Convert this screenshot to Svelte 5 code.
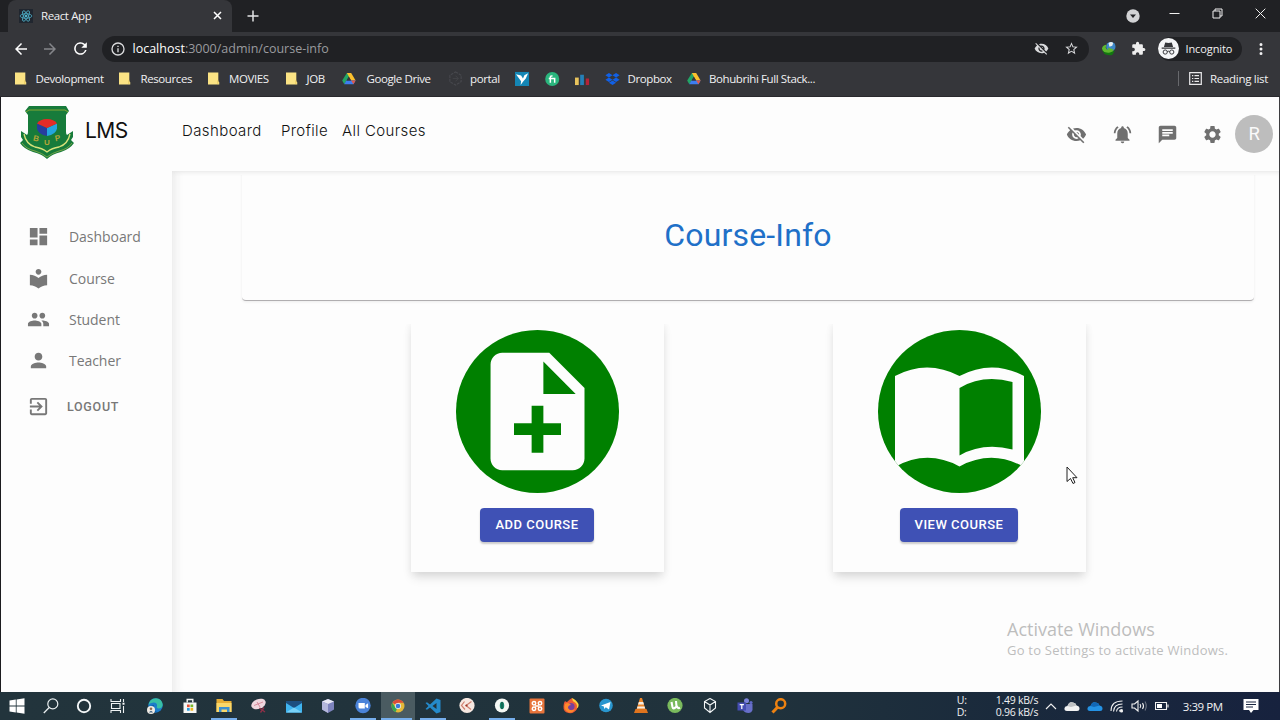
<script>
    // Bookmarks with the width of each slot in the bar
    let bookmarks = [
        { icon: "folder", label: "Devolopment", width: 104, pad: 20.5 },
        { icon: "folder", label: "Resources", width: 89, pad: 21.5 },
        { icon: "folder", label: "MOVIES", width: 78, pad: 21 },
        { icon: "folder", label: "JOB", width: 56, pad: 20.5 },
        { icon: "drive", label: "Google Drive", width: 106, pad: 24.5 },
        { icon: "portal", label: "portal", width: 67, pad: 22 },
        { icon: "bird", label: "", width: 30, pad: 16 },
        { icon: "fiverr", label: "", width: 30, pad: 16 },
        { icon: "bars", label: "", width: 30, pad: 16 },
        { icon: "dropbox", label: "Dropbox", width: 82, pad: 22.5 },
        { icon: "drive", label: "Bohubrihi Full Stack...", width: 140, pad: 22 }
    ];

    let topLinks = ["Dashboard", "Profile", "All Courses"];
    let topIcons = ["hidden", "bell", "chat", "settings"];

    let sideLinks = [
        { icon: "dashboard", label: "Dashboard" },
        { icon: "library", label: "Course" },
        { icon: "people", label: "Student" },
        { icon: "person", label: "Teacher" }
    ];

    let taskApps = [
        { icon: "edge" },
        { icon: "store" },
        { icon: "explorer", open: true },
        { icon: "snip" },
        { icon: "mail" },
        { icon: "cube" },
        { icon: "zoom", open: true },
        { icon: "chrome", open: true, active: true },
        { icon: "vscode", open: true },
        { icon: "anydo" },
        { icon: "mongo", open: true },
        { icon: "xampp" },
        { icon: "firefox" },
        { icon: "telegram" },
        { icon: "vlc" },
        { icon: "utorrent" },
        { icon: "box" },
        { icon: "teams" },
        { icon: "search" }
    ];

    // Single colour icons on a 24 x 24 grid
    const glyphs = {
        back: "M20 11H7.8l5.6-5.6L12 4l-8 8 8 8 1.4-1.4L7.8 13H20z",
        forward: "M4 11h12.2l-5.6-5.6L12 4l8 8-8 8-1.4-1.4 5.6-5.6H4z",
        reload: "M17.65 6.35A8 8 0 1 0 19.73 14h-2.08A6 6 0 1 1 12 6c1.66 0 3.14.69 4.22 1.78L13 11h7V4z",
        info: "M11 7h2v2h-2zm0 4h2v6h-2zm1-9a10 10 0 1 0 0 20 10 10 0 0 0 0-20zm0 18a8 8 0 1 1 0-16 8 8 0 0 1 0 16z",
        star: "M22 9.24l-7.19-.62L12 2 9.19 8.63 2 9.24l5.46 4.73L5.82 21 12 17.27 18.18 21l-1.63-7.03L22 9.24zM12 15.4l-3.76 2.27 1-4.28-3.32-2.88 4.38-.38L12 6.1l1.71 4.04 4.38.38-3.32 2.88 1 4.28L12 15.4z",
        puzzle: "M20.5 11H19V7c0-1.1-.9-2-2-2h-4V3.5a2.5 2.5 0 0 0-5 0V5H4c-1.1 0-2 .9-2 2v3.8h1.5a2.7 2.7 0 0 1 0 5.4H2V20c0 1.1.9 2 2 2h3.800v-1.5a2.7 2.7 0 0 1 5.4 0V22H17c1.1 0 2-.9 2-2v-4h1.500a2.5 2.5 0 0 0 0-5z",
        dots: "M12 8a2 2 0 1 0 0-4 2 2 0 0 0 0 4zm0 2a2 2 0 1 0 0 4 2 2 0 0 0 0-4zm0 6a2 2 0 1 0 0 4 2 2 0 0 0 0-4z",
        hidden: "M12 7c2.76 0 5 2.24 5 5 0 .65-.13 1.26-.36 1.83l2.92 2.92c1.51-1.26 2.7-2.89 3.43-4.75-1.73-4.39-6-7.5-11-7.5-1.4 0-2.74.25-3.98.7l2.16 2.16C10.74 7.13 11.35 7 12 7zM2 4.27l2.28 2.28.46.46C3.08 8.3 1.78 10.02 1 12c1.73 4.39 6 7.5 11 7.5 1.55 0 3.03-.3 4.38-.84l.42.42L19.73 22 21 20.73 3.27 3 2 4.27zM7.53 9.8l1.55 1.55c-.05.21-.08.43-.08.65 0 1.66 1.34 3 3 3 .22 0 .44-.03.65-.08l1.55 1.55c-.67.33-1.41.53-2.2.53-2.76 0-5-2.24-5-5 0-.79.2-1.53.53-2.2zm4.31-.78l3.15 3.15.02-.16c0-1.66-1.34-3-3-3l-.17.01z",
        bell: "M7.58 4.08L6.15 2.65C3.75 4.48 2.17 7.3 2.03 10.5h2c.15-2.65 1.51-4.97 3.55-6.42zm12.39 6.42h2c-.15-3.2-1.73-6.02-4.12-7.85l-1.42 1.43c2.02 1.45 3.39 3.77 3.54 6.42zM18 11c0-3.07-1.64-5.64-4.5-6.32V4c0-.83-.67-1.5-1.5-1.5s-1.5.67-1.5 1.5v.68C7.63 5.36 6 7.92 6 11v5l-2 2v1h16v-1l-2-2v-5zm-6 11c.14 0 .27-.01.4-.04.65-.14 1.18-.58 1.44-1.18.1-.24.15-.5.15-.78h-4c.01 1.1.9 2 2.01 2z",
        chat: "M20 2H4c-1.1 0-1.99.9-1.99 2L2 22l4-4h14c1.1 0 2-.9 2-2V4c0-1.1-.9-2-2-2zM6 9h12v2H6V9zm8 5H6v-2h8v2zm4-6H6V6h12v2z",
        settings: "M19.14 12.94c.04-.3.06-.61.06-.94 0-.32-.02-.64-.07-.94l2.03-1.58c.18-.14.23-.41.12-.61l-1.92-3.32c-.12-.22-.37-.29-.59-.22l-2.39.96c-.5-.38-1.03-.7-1.62-.94l-.36-2.54c-.04-.24-.24-.41-.48-.41h-3.84c-.24 0-.43.17-.47.41l-.36 2.54c-.59.24-1.13.57-1.62.94l-2.39-.96c-.22-.08-.47 0-.59.22L2.74 8.87c-.12.21-.08.47.12.61l2.03 1.58c-.05.3-.09.63-.09.94s.02.64.07.94l-2.03 1.58c-.18.14-.23.41-.12.61l1.92 3.32c.12.22.37.29.59.22l2.39-.96c.5.38 1.03.7 1.62.94l.36 2.54c.05.24.24.41.48.41h3.84c.24 0 .44-.17.47-.41l.36-2.54c.59-.24 1.13-.56 1.62-.94l2.39.96c.22.08.47 0 .59-.22l1.92-3.32c.12-.22.07-.47-.12-.61l-2.01-1.58zM12 15.6c-1.98 0-3.6-1.62-3.6-3.6s1.62-3.6 3.6-3.6 3.6 1.62 3.6 3.6-1.62 3.6-3.6 3.6z",
        dashboard: "M3 13h8V3H3v10zm0 8h8v-6H3v6zm10 0h8V11h-8v10zm0-18v6h8V3h-8z",
        library: "M12 11.55C9.64 9.35 6.48 8 3 8v11c3.48 0 6.64 1.35 9 3.55 2.36-2.19 5.52-3.55 9-3.55V8c-3.48 0-6.64 1.35-9 3.55zM12 8c1.66 0 3-1.34 3-3s-1.34-3-3-3-3 1.34-3 3 1.34 3 3 3z",
        people: "M16 11c1.66 0 2.99-1.34 2.99-3S17.66 5 16 5c-1.66 0-3 1.34-3 3s1.34 3 3 3zm-8 0c1.66 0 2.99-1.34 2.99-3S9.66 5 8 5C6.34 5 5 6.34 5 8s1.34 3 3 3zm0 2c-2.33 0-7 1.17-7 3.5V19h14v-2.5c0-2.33-4.67-3.5-7-3.5zm8 0c-.29 0-.62.02-.97.05 1.16.84 1.97 1.97 1.97 3.45V19h6v-2.5c0-2.33-4.67-3.5-7-3.5z",
        person: "M12 12c2.21 0 4-1.79 4-4s-1.79-4-4-4-4 1.79-4 4 1.79 4 4 4zm0 2c-2.67 0-8 1.34-8 4v2h16v-2c0-2.66-5.33-4-8-4z",
        logout: "M10.09 15.59L11.5 17l5-5-5-5-1.41 1.41L12.67 11H3v2h9.67l-2.58 2.59zM19 3H5c-1.11 0-2 .9-2 2v4h2V5h14v14H5v-4H3v4c0 1.1.89 2 2 2h14c1.1 0 2-.9 2-2V5c0-1.1-.9-2-2-2z",
        noteAdd: "M14 2H6c-1.1 0-1.99.9-1.99 2L4 20c0 1.1.89 2 1.99 2H18c1.1 0 2-.9 2-2V8l-6-6zm2 14h-3v3h-2v-3H8v-2h3v-3h2v3h3v2zm-3-7V3.5L18.500 9H13z"
    };

    // Coloured icons on a 16 x 16 grid
    const art = {
        folder: `<path d="M0 1.500h11v9.500l1 1v2.500H0z" fill="#fbe384"/><path d="M10.500 10v4" stroke="#e5c65b"/>`,
        drive: `<path d="M5.200 2h4.600L4.800 10.500 2.400 14 .2 10.200z" fill="#22a565"/><path d="M5.200 2h4.600l4.700 8.200H9.700z" fill="#fbc02d"/><path d="M4.600 10.200h9.900L12.300 14H2.400z" fill="#3d7df0"/><path d="M9.700 10.200h4.800L12.300 14z" fill="#e0584a"/><path d="M7.200 6l2.400 4.200H4.800z" fill="#35363a"/>`,
        portal: `<path d="M8 1l6 3.500v7L8 15l-6-3.500v-7z" fill="none" stroke="#47484d" stroke-width="1.200" stroke-dasharray="3 1"/><path d="M5 8h6M8 5l3 3-3 3" fill="none" stroke="#424348"/>`,
        bird: `<path d="M0 1h15v15H0z" fill="#1486b5"/><path d="M1 3.500l5.500 1.200L8.500 8 10 4.500l4-2-2.500 5.500-3 3.500L6 15l.500-4z" fill="#fff"/>`,
        fiverr: `<circle cx="7.700" cy="8.500" r="7.500" fill="#2ab57d"/><path d="M5.700 12.500V6.800q0-1.800 2.300-1.500M4 8h6.300v4.500" fill="none" stroke="#fff" stroke-width="1.600"/>`,
        bars: `<path d="M0 7h4v8H0z" fill="#e8c35c"/><path d="M5.500 4h4v11h-4z" fill="#2580b8"/><path d="M11.500 8H15v7h-3.500z" fill="#b62236"/>`,
        dropbox: `<path d="M4.200 2L8 4.400 4.200 6.800.4 4.400zm7.600 0l3.800 2.400-3.800 2.400L8 4.400zM4.200 6.800L8 9.200l-3.800 2.400L.4 9.200zm7.600 0l3.800 2.400-3.800 2.400L8 9.200zM8 10l3.800 2.400L8 14.800l-3.800-2.400z" fill="#1160e6"/>`,
        react: `<path d="M0 0h16v16H0z" fill="#20262f"/><g fill="none" stroke="#4fb3cb" stroke-width=".9"><ellipse cx="8" cy="8" rx="6.700" ry="2.600"/><ellipse cx="8" cy="8" rx="6.700" ry="2.600" transform="rotate(60 8 8)"/><ellipse cx="8" cy="8" rx="6.700" ry="2.600" transform="rotate(120 8 8)"/></g><circle cx="8" cy="8" r="1.400" fill="#4fb3cb"/>`,
        idm: `<circle cx="10.500" cy="6" r="5" fill="#3d87c7"/><path d="M8 2q3-2 5 0l-1 3-3 1z" fill="#e6eef0"/><path d="M1 8q1-4 5-4L5 7q0 2 3 2.500l-.500-2.500 6 2-2 5-1.500-1.500Q2 14 1 8z" fill="#5fb92f"/><path d="M1 8q1 5 8 4.500l6-2.500-3 5Q2 16.500 1 8z" fill="#12780f"/>`,
        incognito: `<circle cx="8" cy="8" r="8" fill="#f4f5f7"/><path d="M5.500 3.500l2.500.4 2.500-.4 1 3.300h-7zM2.800 7.300h10.400v.9H2.800z" fill="#35363a"/><g fill="none" stroke="#35363a" stroke-width=".75"><circle cx="5.500" cy="10.700" r="1.600"/><circle cx="10.500" cy="10.700" r="1.600"/><path d="M7.100 10.300q.9-.5 1.800 0"/></g>`,
        windows: `<path d="M.5 2.400l6.300-.9v6H.5zM7.600 1.400L15.500.3v7.200H7.600zM.5 8.400h6.300v6.100l-6.300-.9zM7.600 8.400h7.900v7.300l-7.900-1.100z" fill="#fff"/>`,
        find: `<circle cx="9.800" cy="5.900" r="5" fill="none" stroke="#e8eef0" stroke-width="1.200"/><path d="M6.200 9.500L.8 15" stroke="#e8eef0" stroke-width="1.300"/>`,
        cortana: `<circle cx="8" cy="8" r="6.200" fill="none" stroke="#f3f6f7" stroke-width="1.900"/>`,
        taskview: `<g fill="none" stroke="#eef2f3" stroke-width="1.100"><path d="M1 1v2.500h9.500V1M1 15v-2.500h9.500V15M1.500 5.500h8.500v5H1.500zM13.500 1v3M13.500 8v7"/></g><path d="M12.500 4.700h2v2h-2z" fill="#fff"/>`,
        edge: `<circle cx="8.500" cy="7.500" r="7.200" fill="#1c7cc9"/><path d="M1.500 7q1-6.500 7.500-6.700 6 .5 6.700 6.200-.2 4-4.200 4-2.500-.3-1.500-2.300Q10.500 4.500 6.500 4.500 3 4.700 1.500 7z" fill="#38bfa5"/><path d="M7 7q-2 5 3.500 7.200-6 1-7.500-4Q4 7 7 7z" fill="#0d57a1"/><circle cx="4" cy="12" r="4" fill="#f0ebe4"/><circle cx="4" cy="10.800" r="1.300" fill="#8b6a50"/><path d="M2 14.500q2-3.500 4 0z" fill="#496a87"/>`,
        store: `<path d="M1.500 4.500h13V15h-13z" fill="#f6f7f5"/><path d="M5.200 4.500v-3h5.600v3" fill="none" stroke="#f6f7f5" stroke-width="1.400"/><path d="M5 6.500h2.700v2.700H5z" fill="#e65034"/><path d="M8.500 6.500h2.700v2.700H8.500z" fill="#77b82a"/><path d="M5 10h2.700v2.700H5z" fill="#299bdc"/><path d="M8.500 10h2.700v2.700H8.500z" fill="#f2b51d"/>`,
        explorer: `<path d="M.5 1h6L8 3h7.500v11H.5z" fill="#e7ae35"/><path d="M.5 5h15v9H.5z" fill="#fad86a"/><path d="M3 9h10.500v5H11v-2.500H5.500V14H3z" fill="#3c8fd0"/>`,
        snip: `<ellipse cx="7.500" cy="6" rx="7.500" ry="4.800" transform="rotate(-22 7.500 6)" fill="#f0d7df"/><path d="M3 7.500L12 4M6 4l3 5" stroke="#d27a8d" stroke-width=".8"/><path d="M8.500 10l5.500 4M13 9.500l-3.500 5" stroke="#8f3048" stroke-width="1.400"/>`,
        mail: `<path d="M0 3h16v11.500H0z" fill="#1d4f80"/><path d="M0 5l8 5 8-5v9.500H0z" fill="#40b5f0"/><path d="M0 14.500l8-5 8 5z" fill="#79d2f8"/>`,
        cube: `<path d="M8 1l6 2.500v8L8 15l-6-3.500v-8z" fill="#7d83bd"/><path d="M8 1l6 2.500L8 6 2 3.500z" fill="#e9e9f5"/><path d="M2 3.500L8 6v9l-6-3.500z" fill="#b4b7dc"/>`,
        zoom: `<circle cx="8" cy="7.500" r="7.700" fill="#4a83d9"/><path d="M3.500 5h6.300v5.500H5q-1.500 0-1.500-1.500zM10.500 7l2.600-1.700v5L10.500 9z" fill="#fff"/>`,
        chrome: `<circle cx="8" cy="8" r="6.500" fill="#e3b838"/><path d="M8 8L2.400 4.700A6.500 6.500 0 0 1 13.600 4.800H8z" fill="#db4b3b"/><path d="M8 8l-2.300 6.100A6.500 6.500 0 0 1 2.400 4.700L5.200 9.400z" fill="#35a354"/><circle cx="8" cy="8" r="3" fill="#f3f3ee"/><circle cx="8" cy="8" r="2.300" fill="#3c79d8"/>`,
        vscode: `<path d="M11.500.5L15.500 2v12l-4 1.500L5 9.500l-3 2.300L.5 11l3-3-3-3L2 4.200l3 2.300zM11.500 5L7.500 8l4 3z" fill="#248acb" fill-rule="evenodd"/>`,
        anydo: `<circle cx="8" cy="7.500" r="7.600" fill="#f7e8e1"/><path d="M12.500 3.500L7 7.500l5 4M5.500 3.500L2.500 7.500 6 11.500" fill="none" stroke="#d08070" stroke-width="1.200"/><circle cx="7.500" cy="7.500" r="1.100" fill="#9d3729"/>`,
        mongo: `<circle cx="8" cy="7.500" r="7.100" fill="#f5f8f5"/><ellipse cx="8" cy="7.500" rx="2.200" ry="3.800" fill="#16866d"/><path d="M8 4v7" stroke="#124e41"/>`,
        xampp: `<rect x=".5" y=".5" width="15" height="15" rx="1" fill="#e8743b"/><g fill="none" stroke="#fff" stroke-width="1.500"><circle cx="5" cy="5.300" r="1.700"/><circle cx="11" cy="5.300" r="1.700"/><circle cx="5" cy="10.700" r="1.700"/><circle cx="11" cy="10.700" r="1.700"/><path d="M6 8h4"/></g>`,
        firefox: `<path d="M2 3q1 1 2 1 3-3 5-4 0 2 3 3.500Q16 7 14 11q-3 5-8.500 4T.5 8Q.5 5 2 3z" fill="#ed5a35"/><path d="M9 0q0 3 3 4.500 3 2.500 1.500 6 2.500-1 2-4.500Q13 1.500 9 0z" fill="#ffcf3e"/><circle cx="8" cy="8.500" r="3.600" fill="#78409f"/><path d="M4 5q3 0 4 2-3 0-3 3 2 4 7 1-2 4-6 3.500Q0 12 2 6z" fill="#ff8a2c"/>`,
        telegram: `<circle cx="8" cy="7.500" r="6.800" fill="#2996cf"/><path d="M3 7.500L12.500 4 11 11.500 7.800 9.300 6.200 11l-.3-2.600z" fill="#fff"/>`,
        vlc: `<path d="M7 0h2l3.500 11.500h-9z" fill="#ee8629"/><path d="M5.800 4h4.400l.8 2.500H5zM4.400 8.500h7.200l.5 2H3.900z" fill="#f5eee4"/><path d="M2.500 11h11L15 15H1z" fill="#df741e"/>`,
        utorrent: `<circle cx="8" cy="7.500" r="7.600" fill="#7aba5d"/><path d="M4.500 4l1 5q.8 3 4-.5L9 3m1 5q.5 3 3 1.800" fill="none" stroke="#fff" stroke-width="2.100"/>`,
        box: `<path d="M8 .5l5.500 3V10L8 14.500 2.500 10V3.500zM2.500 3.500L8 7l5.500-3.500M8 7v7.500" fill="none" stroke="#f2f5f6" stroke-width="1.100"/>`,
        teams: `<circle cx="9.500" cy="2.700" r="2.500" fill="#7c83dc"/><circle cx="14" cy="4.500" r="1.600" fill="#6069c9"/><path d="M6 6h9.500v6q-1 3-4 3-4 0-5.500-3z" fill="#676fc9"/><path d="M.5 4.500h8.500v8H.5z" fill="#454db3"/><path d="M2.700 6.700h4.200M4.800 6.700v4.300" stroke="#fff" stroke-width="1.200"/>`,
        search: `<circle cx="9.700" cy="5.700" r="4.500" fill="none" stroke="#ee8211" stroke-width="2.500"/><path d="M6.500 9.200L1.500 14.500" stroke="#ee8211" stroke-width="3"/>`
    };
</script>

{#snippet glyph(name, size)}
    <svg class="glyph" width={size} height={size} viewBox="0 0 24 24"><path d={glyphs[name]} /></svg>
{/snippet}

{#snippet picture(name, size)}
    <svg class="picture" width={size} height={size} viewBox="0 0 16 16">{@html art[name]}</svg>
{/snippet}

<div class="screen">
    <!-- Browser window -->
    <div class="tabs">
        <div class="tab">
            {@render picture("react", 14)}
            <span>React App</span>
            <svg class="close" width="9" height="9" viewBox="0 0 9 9"><path d="M1 1l7 7M8 1L1 8" /></svg>
        </div>
        <svg class="plus" width="12" height="12" viewBox="0 0 12 12"><path d="M6 .5v11M.5 6h11" /></svg>
        <div class="controls">
            <svg width="14" height="14" viewBox="0 0 14 14"><circle cx="7" cy="7" r="6.700" fill="#d2d3d5" /><path d="M4 5.500h6L7 9z" fill="#202124" /></svg>
            <svg class="min" width="11" height="11" viewBox="0 0 11 11"><path d="M.5 5.500h10" /></svg>
            <svg class="max" width="11" height="11" viewBox="0 0 11 11"><path d="M1 3h7v7H1zM3 3V1h7v7H8" /></svg>
            <svg width="11" height="11" viewBox="0 0 11 11"><path d="M.7.700l9.600 9.600M10.300.700L.7 10.300" /></svg>
        </div>
    </div>

    <div class="toolbar">
        <span class="nav">{@render glyph("back", 18)}</span>
        <span class="nav dim">{@render glyph("forward", 18)}</span>
        <span class="nav">{@render glyph("reload", 19)}</span>
        <div class="address">
            {@render glyph("info", 16)}
            <span class="url">localhost<span>:3000/admin/course-info</span></span>
            <div class="address-icons">
                {@render glyph("hidden", 15)}
                {@render glyph("star", 15)}
            </div>
        </div>
        <div class="extensions">
            {@render picture("idm", 15)}
            {@render glyph("puzzle", 15)}
        </div>
        <div class="incognito">
            {@render picture("incognito", 21)}
            <span>Incognito</span>
        </div>
        <span class="more">{@render glyph("dots", 18)}</span>
    </div>

    <div class="bookmarks">
        {#each bookmarks as mark}
            <div class="bookmark" style:width="{mark.width}px">
                <span class="bookmark-icon" style:width="{mark.pad}px">{@render picture(mark.icon, 15)}</span>
                <span>{mark.label}</span>
            </div>
        {/each}
        <div class="reading">
            <svg width="13" height="13" viewBox="0 0 13 13"><path d="M.7.700h11.600v11.600H.7zM3 3.700h1.300M5.500 3.700H10M3 6.500h1.300M5.500 6.500H10M3 9.300h1.300M5.500 9.300H10" /></svg>
            <span>Reading list</span>
        </div>
    </div>

    <!-- The LMS page -->
    <div class="page">
        <header>
            <svg class="crest" width="56" height="56" viewBox="0 0 56 56">
                <path d="M10 1h37l3 5-3 4v17q0 2 1 3l6-4v6l-2 3 3 3q-4 6-13 9-9 2-14 7-5-5-14-7-9-3-13-9l3-3-2-3v-6l6 4q1-1 1-3V10L6 6z" fill="#177b3b" />
                <path d="M7 7l3-2h36l3 2" fill="none" stroke="#85a735" />
                <path d="M5 29q2 10 11 13 7 1 12 5 5-4 12-5 9-3 11-13" fill="none" stroke="#d8e17a" stroke-width="1.300" />
                <path d="M3 38q4 6 13 8 7 2 12 6 5-4 12-6 9-2 13-8" fill="none" stroke="#8ead4b" stroke-width=".8" />
                <path d="M28 23l-10-4.500v5q1 6 10 7.500z" fill="#273d9e" />
                <path d="M28 23l10-4.500v5q-1 6-10 7.500z" fill="#24a5df" />
                <path d="M18 18.500q3-4.500 10-4.500t10 4.500L28 23z" fill="#e42b27" />
                <g class="crest-text"><text x="14" y="36" transform="rotate(12 16 34)">B</text><text x="25" y="40">U</text><text x="36" y="36" transform="rotate(-12 38 34)">P</text></g>
            </svg>
            <h1>LMS</h1>
            <nav>
                {#each topLinks as link}
                    <a href="#top">{link}</a>
                {/each}
            </nav>
            <div class="actions">
                {#each topIcons as icon}
                    {@render glyph(icon, 21)}
                {/each}
            </div>
            <div class="avatar">R</div>
        </header>

        <div class="body">
            <aside>
                {#each sideLinks as link}
                    <div class="side-link">
                        {@render glyph(link.icon, 23)}
                        <span>{link.label}</span>
                    </div>
                {/each}
                <div class="side-link logout">
                    {@render glyph("logout", 23)}
                    <span>LOGOUT</span>
                </div>
            </aside>

            <main>
                <div class="paper"><h2>Course-Info</h2></div>
                <div class="cards">
                    <div class="card">
                        <div class="round">
                            {@render glyph("noteAdd", 141)}
                        </div>
                        <button>ADD COURSE</button>
                    </div>
                    <div class="card">
                        <div class="round">
                            <svg width="163" height="163" viewBox="0 0 163 163">
                                <path d="M17 46Q49 29 81.500 46 114 29 146 46V137Q114 119 81.500 136.500 49 119 17 137zM81.500 58V125.500Q105 112 134.500 119.500V52Q105 44 81.500 58z" fill-rule="evenodd" />
                            </svg>
                        </div>
                        <button>VIEW COURSE</button>
                    </div>
                </div>
            </main>
        </div>
    </div>

    <!-- Lies over the page -->
    <div class="activate">
        <div class="activate-title">Activate Windows</div>
        <div class="activate-text">Go to Settings to activate Windows.</div>
    </div>
    <svg class="cursor" width="12" height="19" viewBox="0 0 12 19"><path d="M1 1v14.500l3.500-3 2.500 5 2-1-2.300-4.800H11z" /></svg>

    <!-- Windows taskbar -->
    <div class="taskbar">
        {#each ["windows", "find", "cortana", "taskview"] as icon}
            <div class="system">{@render picture(icon, 16)}</div>
        {/each}
        <div class="apps">
            {#each taskApps as app}
                <div class="app" class:open={app.open} class:active={app.active}>{@render picture(app.icon, 16)}</div>
            {/each}
        </div>
        <div class="net">
            <span>U:</span><span>1.49 kB/s</span>
            <span>D:</span><span>0.96 kB/s</span>
        </div>
        <div class="tray">
            <svg width="12" height="16" viewBox="0 0 12 16"><path d="M1 11l5-5 5 5" /></svg>
            <svg class="cloud" width="16" height="16" viewBox="0 0 16 16"><path d="M3 13Q0 13 .5 10 1 8 3.500 8 5 3 9 4.500q3 .5 3.500 3 3 .5 3 3T13 13z" fill="#f2f2f2" /><path d="M3.500 8Q5 3 9 4.500q3 .5 3.500 3L7 9z" fill="#bfc1c3" /></svg>
            <svg class="cloud" width="16" height="16" viewBox="0 0 16 16"><path d="M3 13Q0 13 .5 10 1 8 3.500 8 5 3 9 4.500q3 .5 3.500 3 3 .5 3 3T13 13z" fill="#2492e4" /><path d="M3.500 8Q5 3 9 4.500q3 .5 3.500 3L7 9z" fill="#1267b5" /></svg>
            <svg width="14" height="16" viewBox="0 0 14 16"><path d="M1 13Q1 3 12.500 3M3.500 13.500Q4 6 12.500 6M6.500 13.500Q7 9 12.500 9M9.500 13.500q0-2 3-2" /><circle cx="11.500" cy="13" r="1" fill="#fff" /></svg>
            <svg width="17" height="16" viewBox="0 0 17 16"><path d="M1 6h2.500L7 3v10l-3.500-3H1zM9 6q1.500 2 0 4M11.500 5q2 3 0 6" /><path d="M14 3.500q2.500 4.500 0 9" opacity=".4" /></svg>
            <svg width="14" height="16" viewBox="0 0 14 16"><path d="M.5 4.500h11v7H.5zM13 6.500v3" /><path d="M2 6h5v4H2z" fill="#fff" stroke="none" /></svg>
        </div>
        <span class="clock">3:39 PM</span>
        <svg class="notice" width="16" height="16" viewBox="0 0 16 16"><path d="M.5 1h15v11h-5L8 15l-2-3H.5z" fill="#fff" /><path d="M3 4h10M3 6.500h10M3 9h7" stroke="#1a2740" /></svg>
    </div>
</div>

<style>
    :global(body) {
        margin: 0;
        background: #fdfdfd;
    }

    svg {
        display: block;
        flex: none;
    }

    .glyph {
        fill: currentColor;
    }

    .screen {
        position: relative;
        display: flex;
        flex-direction: column;
        width: 1280px;
        height: 720px;
        overflow: hidden;
        font-family: "Open Sans", "Noto Sans", sans-serif;
        font-size: 11.5px;
        letter-spacing: -0.4px;
        color: #f1f1f2;
        white-space: nowrap;
    }

    /* Tab strip */
    .tabs {
        display: flex;
        height: 32px;
        background: #202124;
        padding-left: 8px;
    }

    .tab {
        display: flex;
        align-items: center;
        box-sizing: border-box;
        width: 224px;
        padding: 0 10px 1px 11px;
        gap: 8px;
        border-radius: 8px 8px 0 0;
        background: #35363a;
    }

    .close {
        margin-left: auto;
        fill: none;
        stroke: #fff;
        stroke-width: 1.5;
    }

    .plus {
        margin: 10px 0 0 15px;
        stroke: #e2e3e5;
        stroke-width: 1.5;
    }

    .controls {
        display: flex;
        align-items: center;
        height: 27px;
        gap: 32px;
        margin: 0 14px 0 auto;
        fill: none;
        stroke: #f0f0f0;
        stroke-width: 1;
    }

    .controls svg:first-child {
        margin: 4px -3px 0 0;
        stroke: none;
    }

    /* Address row */
    .toolbar {
        display: flex;
        align-items: center;
        height: 33px;
        padding-left: 12px;
        background: #35363a;
    }

    .nav {
        width: 30px;
        margin-left: -0.5px;
        color: #fff;
    }

    .dim {
        color: #85868a;
    }

    .address {
        display: flex;
        align-items: center;
        box-sizing: border-box;
        width: 987px;
        height: 26px;
        margin-left: 1px;
        padding: 0 10px 0 8px;
        border-radius: 13px;
        background: #202124;
        color: #dadbdd;
    }

    .url {
        margin-left: 7px;
        font-size: 12.5px;
        letter-spacing: 0;
        color: #fff;
    }

    .url span {
        color: #9a9b9f;
    }

    .address-icons {
        display: flex;
        gap: 15px;
        margin-left: auto;
    }

    .extensions {
        display: flex;
        gap: 15px;
        margin-left: 12px;
        color: #eee;
    }

    .incognito {
        display: flex;
        align-items: center;
        box-sizing: border-box;
        width: 84px;
        height: 24px;
        gap: 7px;
        margin-left: 12px;
        border-radius: 12px;
        background: #202124;
        font-size: 11px;
        letter-spacing: -0.1px;
    }

    .more {
        margin-left: 10px;
    }

    .bookmarks {
        display: flex;
        align-items: center;
        box-sizing: border-box;
        height: 32px;
        padding: 0 12px 5px 15px;
        border-bottom: 1px solid #29292d;
        background: #35363a;
    }

    .bookmark {
        display: flex;
        align-items: center;
    }

    .bookmark-icon {
        flex: none;
    }

    .reading {
        display: flex;
        align-items: center;
        height: 15px;
        gap: 8px;
        margin-left: auto;
        padding-left: 10px;
        border-left: 1px solid #68696d;
        letter-spacing: -0.3px;
    }

    .reading svg {
        fill: none;
        stroke: #e8e8ea;
        stroke-width: 1.2;
    }

    /* LMS page */
    .page {
        display: flex;
        flex-direction: column;
        box-sizing: border-box;
        height: 595px;
        border-left: 1px solid #1c1c1f;
        border-right: 1px solid #3d3d40;
        background: #fdfdfd;
    }

    header {
        display: flex;
        align-items: center;
        box-sizing: border-box;
        height: 74px;
        padding: 0 6px 0 18px;
        color: #111;
    }

    .crest {
        margin-top: -2px;
    }

    .crest-text {
        font: bold 8px "Liberation Sans", sans-serif;
        fill: #b7a536;
    }

    h1 {
        width: 97px;
        margin: -8px 0 0 10px;
        font: 400 21px Inter, sans-serif;
        letter-spacing: -0.5px;
    }

    nav {
        display: grid;
        grid-template-columns: 99px 61px auto;
        margin-top: -7px;
    }

    nav a {
        font: 300 15px Inter, sans-serif;
        letter-spacing: 0.4px;
        color: #111;
        text-decoration: none;
    }

    .actions {
        display: flex;
        gap: 24.2px;
        margin-left: auto;
        color: #707070;
    }

    .avatar {
        width: 38px;
        height: 38px;
        margin-left: 12px;
        border-radius: 50%;
        background: #bdbdbd;
        color: #fafafa;
        font: 18.500px/38px Roboto, sans-serif;
        text-align: center;
    }

    .body {
        display: flex;
        flex: 1;
        min-height: 0;
    }

    aside {
        box-sizing: border-box;
        width: 171px;
        padding: 45px 0 0 26px;
        color: #787878;
    }

    .side-link {
        display: flex;
        align-items: center;
        height: 41.4px;
        gap: 19px;
        font-size: 14px;
        letter-spacing: -0.05px;
    }

    .logout {
        height: 50px;
        gap: 17px;
        font: 500 12.500px Roboto, sans-serif;
        letter-spacing: 0.7px;
    }

    main {
        flex: 1;
        padding-left: 70px;
        box-shadow: inset 0 4px 5px -3px #e4e4e4, inset 10px 0 8px -6px #ededed;
    }

    .paper {
        box-sizing: border-box;
        width: 1012px;
        height: 130px;
        padding-top: 45px;
        border-bottom: 1px solid #b0aeb0;
        border-radius: 0 0 4px 4px;
        box-shadow: 0 1px 3px rgba(0, 0, 0, 0.07);
        clip-path: inset(4px -4px -5px -4px);
    }

    h2 {
        margin: 0;
        font: 400 32px/38px Roboto, sans-serif;
        letter-spacing: 0.15px;
        text-align: center;
        color: #1f70c8;
    }

    .cards {
        display: flex;
        gap: 169px;
        margin: 19px 0 0 168.5px;
    }

    .card {
        display: flex;
        flex-direction: column;
        align-items: center;
        box-sizing: border-box;
        width: 253px;
        height: 252px;
        padding-top: 10px;
        background: #fdfdfd;
        box-shadow: 0 7px 10px -2px rgba(0, 0, 0, 0.13), 0 2px 8px rgba(0, 0, 0, 0.05);
        clip-path: inset(4px -16px -24px -16px);
    }

    .round {
        display: flex;
        align-items: center;
        justify-content: center;
        width: 163px;
        height: 163px;
        border-radius: 50%;
        overflow: hidden;
        background: #008000;
        color: #fdfdfd;
        fill: #fdfdfd;
    }

    button {
        height: 34px;
        margin-top: 15px;
        padding: 0 15px 2px;
        border: none;
        border-radius: 4px;
        background: #3f51b5;
        color: #fff;
        font: 500 13px Roboto, sans-serif;
        letter-spacing: 0.5px;
        box-shadow: 0 2px 2px rgba(0, 0, 0, 0.2);
    }

    .activate {
        position: absolute;
        left: 1007px;
        top: 617px;
        color: #bdbdbd;
    }

    .activate-title {
        font-size: 18px;
        line-height: 24px;
        letter-spacing: 0;
    }

    .activate-text {
        font-size: 13px;
        line-height: 19px;
        letter-spacing: 0.23px;
    }

    .cursor {
        position: absolute;
        left: 1066px;
        top: 466px;
        fill: #fff;
        stroke: #222;
    }

    /* Taskbar */
    .taskbar {
        display: flex;
        align-items: center;
        height: 28px;
        background: linear-gradient(90deg, #22343c 0%, #20323c 60%, #1a2a3c 78%, #17223e 100%);
    }

    .system {
        display: flex;
        justify-content: center;
        width: 33.8px;
    }

    .apps {
        display: flex;
        height: 28px;
        margin-left: 2.5px;
    }

    .app {
        display: flex;
        align-items: center;
        justify-content: center;
        width: 34.7px;
    }

    .open {
        background: linear-gradient(#76aeec, #76aeec) center bottom / 26px 2px no-repeat;
    }

    .active {
        background: linear-gradient(#76aeec, #76aeec) left bottom / 31px 2px no-repeat, #4a5b61;
    }

    .net {
        display: grid;
        grid-template-columns: 39px 42px;
        margin-left: 160px;
        font-size: 10.500px;
        line-height: 12px;
        letter-spacing: -0.25px;
    }

    .tray {
        display: flex;
        gap: 7px;
        margin-left: 7px;
        fill: none;
        stroke: #f1f1f1;
        stroke-width: 1.1;
    }

    .cloud {
        stroke: none;
    }

    .clock {
        width: 41px;
        margin-left: 14px;
        letter-spacing: -0.45px;
    }

    .notice {
        margin-left: 19px;
    }
</style>
